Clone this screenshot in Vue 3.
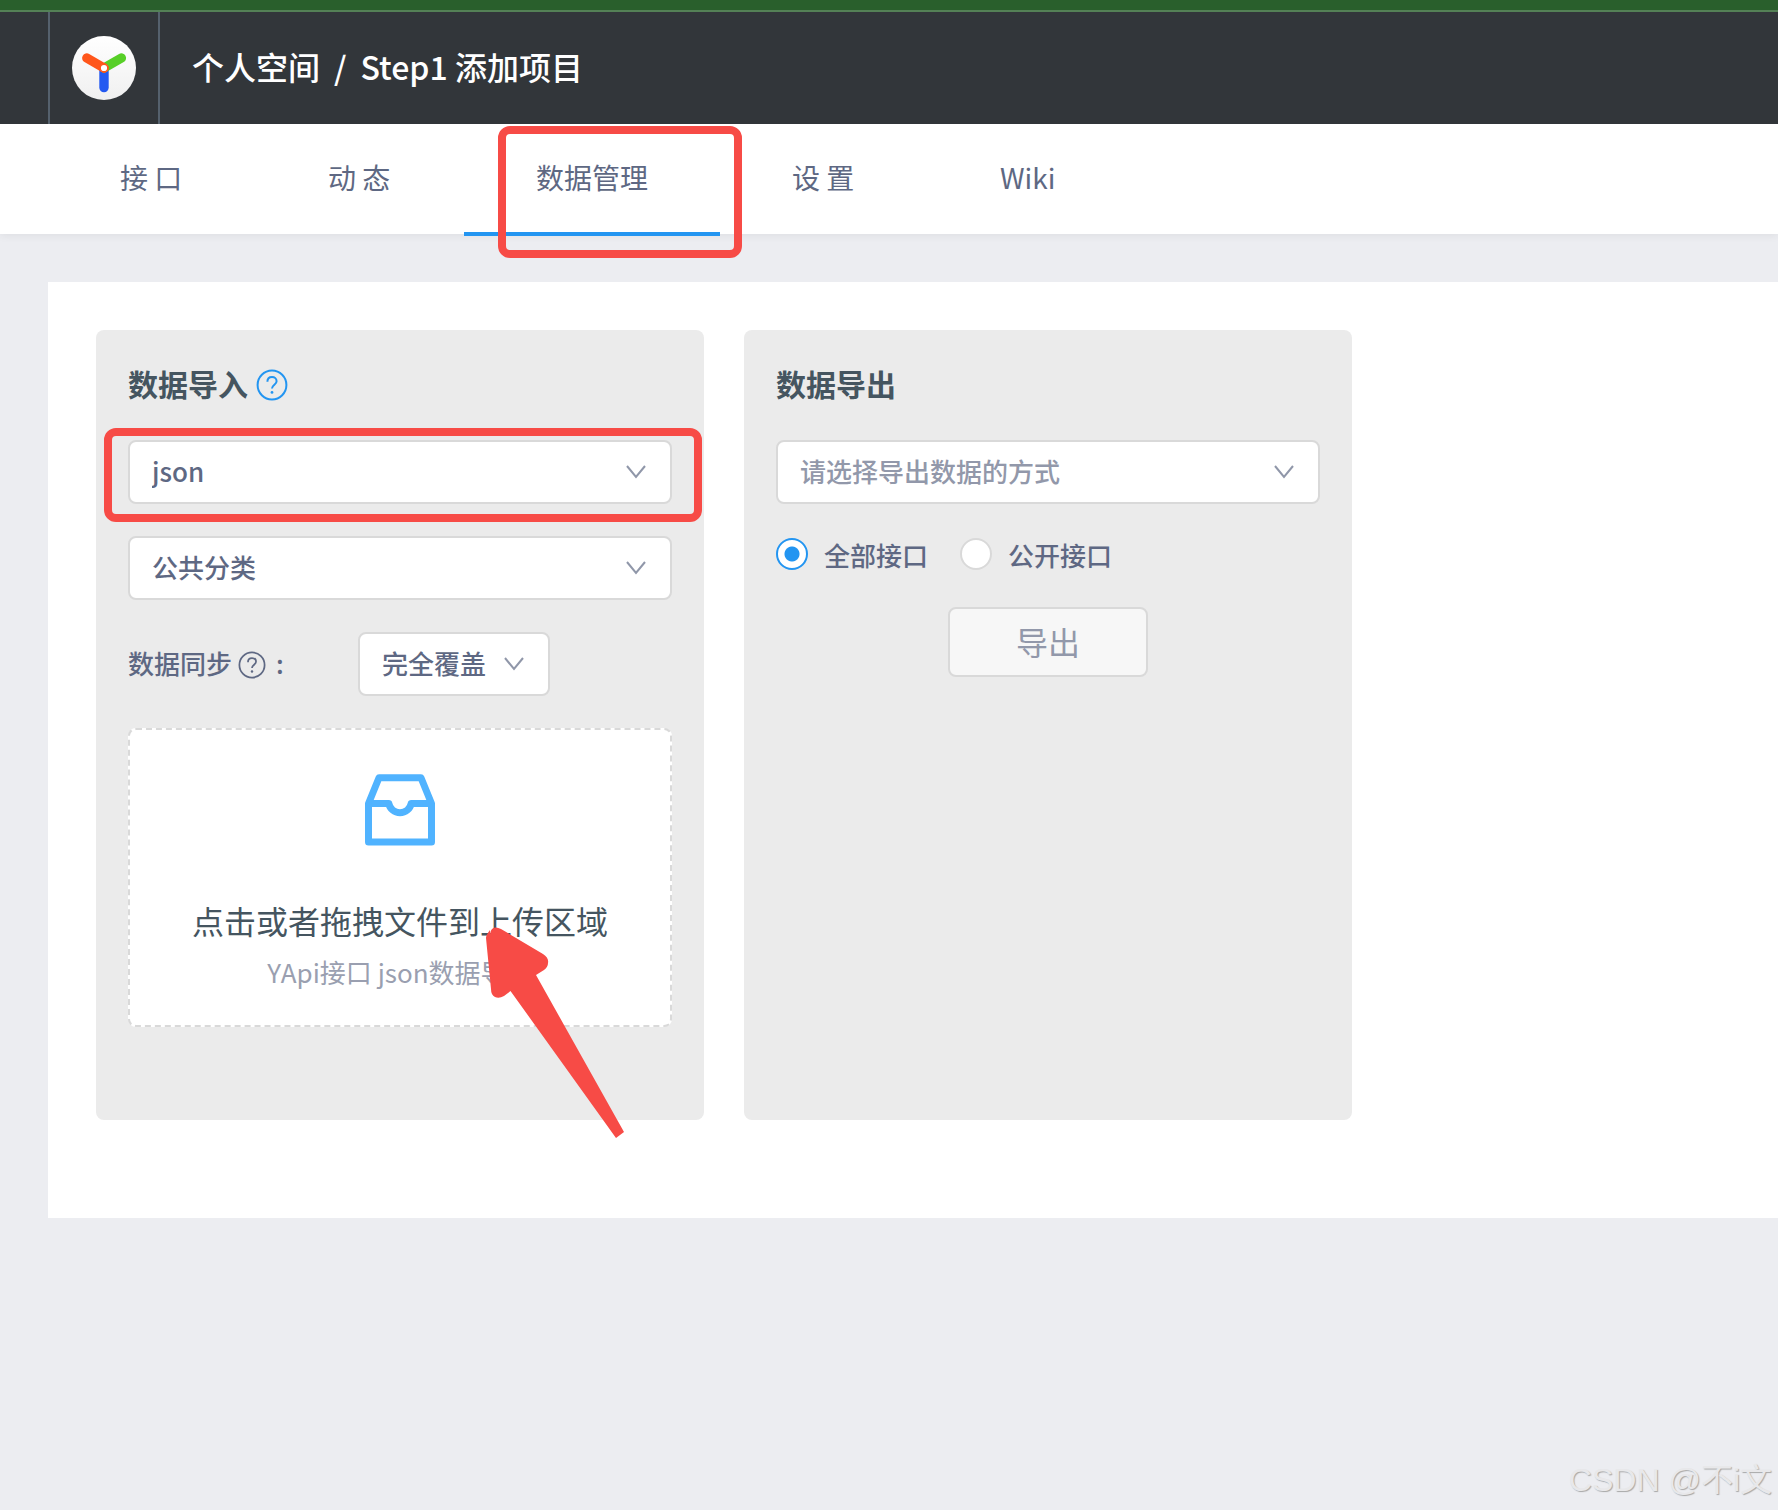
<template>
  <div class="page">
    <div class="top-strip"></div>
    <header class="header">
      <a href="#" class="logo" aria-label="YApi">
        <svg viewBox="0 0 64 64" width="64" height="64">
          <defs>
            <linearGradient id="logo-bg" x1="0" y1="0" x2="0" y2="1">
              <stop offset="0" stop-color="#ffffff" />
              <stop offset="1" stop-color="#f0f0f0" />
            </linearGradient>
          </defs>
          <circle cx="32" cy="32" r="32" fill="url(#logo-bg)" />
          <g fill="none" stroke-width="9.4" stroke-linecap="round">
            <path d="M32 32V51.6" stroke="#2359f1" />
            <path d="M32 32L49.4 22" stroke="#57cf27" />
            <path d="M32 32L14.8 22" stroke="#ff561b" />
          </g>
          <circle cx="32" cy="32" r="3.9" fill="#fff" stroke="#ff561b" stroke-width="1.6" />
        </svg>
      </a>
      <div class="breadcrumb">
        <a href="#">个人空间</a>
        <span class="slash">/</span>
        <a href="#">Step1 添加项目</a>
      </div>
    </header>

    <nav class="subnav">
      <ul>
        <li v-for="tab in tabs" :key="tab" :class="{ active: tab === activeTab }">
          <a href="#" @click.prevent="activeTab = tab">{{ tab }}</a>
          <span v-if="tab === '数据管理'" class="mark mark-tab"></span>
        </li>
      </ul>
    </nav>

    <main class="content">
      <section class="card">
        <h2 class="card-title">
          数据导入
          <svg class="help-icon" viewBox="0 0 32 32" width="32" height="32">
            <circle cx="16" cy="16" r="14.4" />
            <path d="M11.4 12.8c0-2.9 1.9-4.8 4.6-4.8s4.6 1.8 4.6 4.3c0 3.3-4.6 3.6-4.6 7.2" />
            <circle class="dot" cx="16" cy="23.4" r="1.4" />
          </svg>
        </h2>
        <div class="select-box">
          <select v-model="importType" aria-label="导入方式">
            <option>json</option>
            <option>swagger</option>
            <option>postman</option>
          </select>
          <svg class="chevron" viewBox="0 0 20 14" width="20" height="14"><path d="M1 1L10 12L19 1" /></svg>
          <span class="mark mark-select"></span>
        </div>
        <div class="select-box">
          <select v-model="category" aria-label="分类">
            <option>公共分类</option>
          </select>
          <svg class="chevron" viewBox="0 0 20 14" width="20" height="14"><path d="M1 1L10 12L19 1" /></svg>
        </div>
        <div class="sync-row">
          <label for="sync" class="sync-label">
            数据同步
            <svg class="help-icon" viewBox="0 0 32 32" width="28" height="28">
              <circle cx="16" cy="16" r="14.4" />
              <path d="M11.4 12.8c0-2.9 1.9-4.8 4.6-4.8s4.6 1.8 4.6 4.3c0 3.3-4.6 3.6-4.6 7.2" />
              <circle class="dot" cx="16" cy="23.4" r="1.4" />
            </svg>
            <span class="colon">:</span>
          </label>
          <div class="select-box sync-select">
            <select id="sync" v-model="syncMode">
              <option>普通模式</option>
              <option>智能合并</option>
              <option>完全覆盖</option>
            </select>
            <svg class="chevron" viewBox="0 0 20 14" width="20" height="14"><path d="M1 1L10 12L19 1" /></svg>
          </div>
        </div>
        <button type="button" class="upload">
          <svg class="inbox" viewBox="0 0 72 72" width="72" height="72">
            <path d="M4.5 29.5L15 3.8H57L67.5 29.5V68H4.5Z" />
            <path d="M4.5 29.5H24.8A11.4 11.4 0 0 0 47.2 29.5H67.5" />
          </svg>
          <span class="upload-text">点击或者拖拽文件到上传区域</span>
          <span class="upload-hint">YApi接口 json数据导入</span>
          <svg class="arrow" viewBox="0 0 140 212" width="140" height="212">
            <path d="M6 8Q7 1 12 1.500Q14 1.500 17 3L59 28Q65 32 64 37Q64 41 60 44L52 49L140 206L132 212L26.500 65L20 70Q15 73 11 71Q7 69 7 63L2 12Q2 9 6 4Z" />
          </svg>
        </button>
      </section>

      <section class="card">
        <h2 class="card-title">数据导出</h2>
        <div class="select-box">
          <select v-model="exportType" :class="{ placeholder: !exportType }" aria-label="导出方式">
            <option value="">请选择导出数据的方式</option>
            <option>html</option>
            <option>json</option>
          </select>
          <svg class="chevron" viewBox="0 0 20 14" width="20" height="14"><path d="M1 1L10 12L19 1" /></svg>
        </div>
        <div class="radios">
          <label v-for="item in scopes" :key="item">
            <input v-model="scope" type="radio" name="scope" :value="item" />
            {{ item }}
          </label>
        </div>
        <button type="button" class="export-btn" :disabled="!exportType">导出</button>
      </section>
    </main>

    <div class="watermark">CSDN @不i文</div>
  </div>
</template>

<script setup>
import { ref } from "vue";

const tabs = ["接 口", "动 态", "数据管理", "设 置", "Wiki"];
const scopes = ["全部接口", "公开接口"];

const activeTab = ref("数据管理");
const importType = ref("json");
const category = ref("公共分类");
const syncMode = ref("完全覆盖");
const exportType = ref("");
const scope = ref("全部接口");
</script>

<style>
body {
  margin: 0;
  background: #ecedf1;
}
</style>

<style scoped>
.page {
  position: relative;
  box-sizing: border-box;
  min-height: 100vh;
  overflow: hidden;
  font-family: "Noto Sans CJK SC", sans-serif;
  color: #5e6883;
}

a {
  color: inherit;
  text-decoration: none;
}

.top-strip {
  height: 10px;
  background: #295f2c;
  border-bottom: 2px solid #548156;
}

.header {
  display: flex;
  height: 112px;
  padding-left: 48px;
  background: #32363a;
}

.logo {
  display: flex;
  align-items: center;
  justify-content: center;
  width: 108px;
  border-left: 2px solid #55616d;
  border-right: 2px solid #55616d;
}

.breadcrumb {
  display: flex;
  align-items: center;
  gap: 14px;
  padding: 0 0 4px 32px;
  font-size: 32px;
  font-weight: 500;
  color: #fff;
}

.subnav {
  height: 110px;
  background: #fff;
  box-shadow: 0 2px 8px rgba(0, 0, 0, 0.06);
}

.subnav ul {
  display: flex;
  margin: 0;
  padding: 0 0 0 48px;
  list-style: none;
}

.subnav li {
  position: relative;
  box-sizing: border-box;
  min-width: 208px;
  height: 112px;
  padding: 0 72px;
  font-size: 28px;
  line-height: 106px;
  white-space: nowrap;
}

.subnav li.active {
  border-bottom: 4px solid #2395f1;
}

.mark {
  position: absolute;
  z-index: 2;
  box-sizing: border-box;
  border: 8px solid #f74b46;
  border-radius: 12px;
  pointer-events: none;
}

.mark-tab {
  top: 2px;
  left: 34px;
  width: 244px;
  height: 132px;
}

.mark-select {
  inset: -12px -30px -18px -24px;
}

.content {
  display: flex;
  gap: 40px;
  margin: 48px 0 0 48px;
  padding: 48px 48px 98px;
  background: #fff;
}

.card {
  box-sizing: border-box;
  width: 608px;
  min-height: 790px;
  padding: 32px;
  border-radius: 8px;
  background: #ebebeb;
}

.card-title {
  display: flex;
  align-items: center;
  gap: 8px;
  height: 42px;
  margin: 0 0 36px;
  font-size: 30px;
  font-weight: 700;
  color: #455560;
}

.help-icon {
  margin-top: 4px;
  fill: none;
  stroke: currentColor;
  stroke-width: 2;
}

.help-icon .dot {
  fill: currentColor;
  stroke: none;
}

.card-title .help-icon {
  color: #2395f1;
}

.select-box {
  position: relative;
  display: flex;
  align-items: center;
  height: 64px;
  margin-bottom: 32px;
}

.select-box select {
  box-sizing: border-box;
  width: 100%;
  height: 100%;
  padding: 0 48px 3px 22px;
  border: 2px solid #d9d9d9;
  border-radius: 8px;
  background: #fff;
  color: inherit;
  font-family: inherit;
  font-size: 26px;
  font-weight: 500;
  appearance: none;
}

.select-box select.placeholder {
  color: #9298aa;
}

.chevron {
  position: absolute;
  right: 26px;
  fill: none;
  stroke: #9097a9;
  stroke-width: 2;
  pointer-events: none;
}

.sync-row {
  display: flex;
  margin-bottom: 32px;
}

.sync-label {
  display: flex;
  align-items: center;
  gap: 6px;
  box-sizing: border-box;
  width: 230px;
  padding-bottom: 3px;
  font-size: 26px;
  font-weight: 500;
}

.colon {
  padding-left: 4px;
}

.sync-select {
  width: 192px;
  margin-bottom: 0;
}

.upload {
  position: relative;
  display: flex;
  flex-direction: column;
  align-items: center;
  box-sizing: border-box;
  width: 100%;
  height: 299px;
  padding: 44px 0 0;
  border: 2px dashed #d9d9d9;
  border-radius: 8px;
  background: #fff;
  font-family: inherit;
}

.inbox {
  fill: none;
  stroke: #50b3ff;
  stroke-width: 7;
  stroke-linejoin: round;
}

.upload-text {
  margin-top: 50px;
  font-size: 32px;
  line-height: 48px;
  color: #455560;
}

.upload-hint {
  margin-top: 8px;
  font-size: 26px;
  line-height: 40px;
  color: #9a9fb0;
}

.arrow {
  position: absolute;
  z-index: 2;
  top: 196px;
  left: 354px;
  fill: #f74b46;
  pointer-events: none;
}

.radios {
  display: flex;
  gap: 32px;
  height: 36px;
  margin-bottom: 35px;
  font-size: 26px;
  font-weight: 500;
}

.radios label {
  display: flex;
  align-items: center;
  gap: 16px;
}

.radios input {
  width: 32px;
  height: 32px;
  margin: 0;
  border: 2px solid #d9d9d9;
  border-radius: 50%;
  background: #fff;
  appearance: none;
}

.radios input:checked {
  border-color: #2395f1;
  background: radial-gradient(circle, #2395f1 7px, #fff 8px);
}

.export-btn {
  display: block;
  width: 200px;
  height: 70px;
  margin: 0 auto;
  padding: 0 0 3px;
  border: 2px solid #d9d9d9;
  border-radius: 8px;
  background: #f7f7f7;
  color: #9298aa;
  font-family: inherit;
  font-size: 32px;
}

.watermark {
  position: absolute;
  right: 6px;
  bottom: 10px;
  font-family: "Liberation Sans", "Noto Sans CJK SC", sans-serif;
  font-size: 32px;
  color: #e8e8ea;
  text-shadow: 1px 1px 1px #a8a8a8;
}
</style>
